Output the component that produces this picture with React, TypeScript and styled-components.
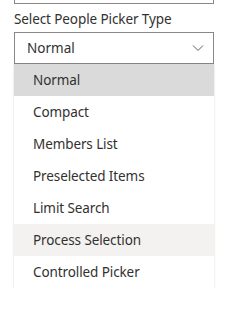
import React from "react";
import styled, { createGlobalStyle } from "styled-components";

const Global = createGlobalStyle`
  body {
    margin: 0;
    background: #ffffff;
    font-family: "Segoe UI", "Noto Sans", "Open Sans", sans-serif;
    color: #323130;
  }
`;

const Page = styled.div`
  padding: 0 29px 0 14px;
  width: 200px;
`;

const PrevField = styled.div`
  height: 3px;
  border: 1px solid #8a8886;
  border-top: none;
`;

const Label = styled.div`
  font-size: 13.5px;
  line-height: 20px;
  margin-top: 5px;
  margin-bottom: 3px;
  letter-spacing: -0.1px;
`;

const Select = styled.div`
  height: 30px;
  border: 1px solid #8a8886;
  display: flex;
  align-items: center;
  justify-content: space-between;
  padding: 0 9px 0 12px;
  font-size: 13.5px;
`;

const Menu = styled.div`
  box-shadow: 0 1px 2px rgba(0, 0, 0, 0.14), 0 0 1px rgba(0, 0, 0, 0.1);
  background: #fff;
`;

const Item = styled.div<{ $state?: "selected" | "hover" }>`
  height: 32px;
  display: flex;
  align-items: center;
  padding-left: 19px;
  font-size: 13.5px;
  letter-spacing: -0.1px;
  background: ${(p) =>
    p.$state === "selected" ? "#dadada" : p.$state === "hover" ? "#f3f2f1" : "#fff"};
`;

const items = [
  "Normal",
  "Compact",
  "Members List",
  "Preselected Items",
  "Limit Search",
  "Process Selection",
  "Controlled Picker",
];

const Chevron = () => (
  <svg width="12" height="8" viewBox="0 0 12 8">
    <path d="M1 1.5 L6 6.5 L11 1.5" fill="none" stroke="#605e5c" strokeWidth="1" />
  </svg>
);

export default function App() {
  return (
    <Page>
      <Global />
      <PrevField />
      <Label>Select People Picker Type</Label>
      <Select>
        <span>Normal</span>
        <Chevron />
      </Select>
      <Menu>
        {items.map((t, i) => (
          <Item key={t} $state={i === 0 ? "selected" : i === 5 ? "hover" : undefined}>
            {t}
          </Item>
        ))}
      </Menu>
    </Page>
  );
}
